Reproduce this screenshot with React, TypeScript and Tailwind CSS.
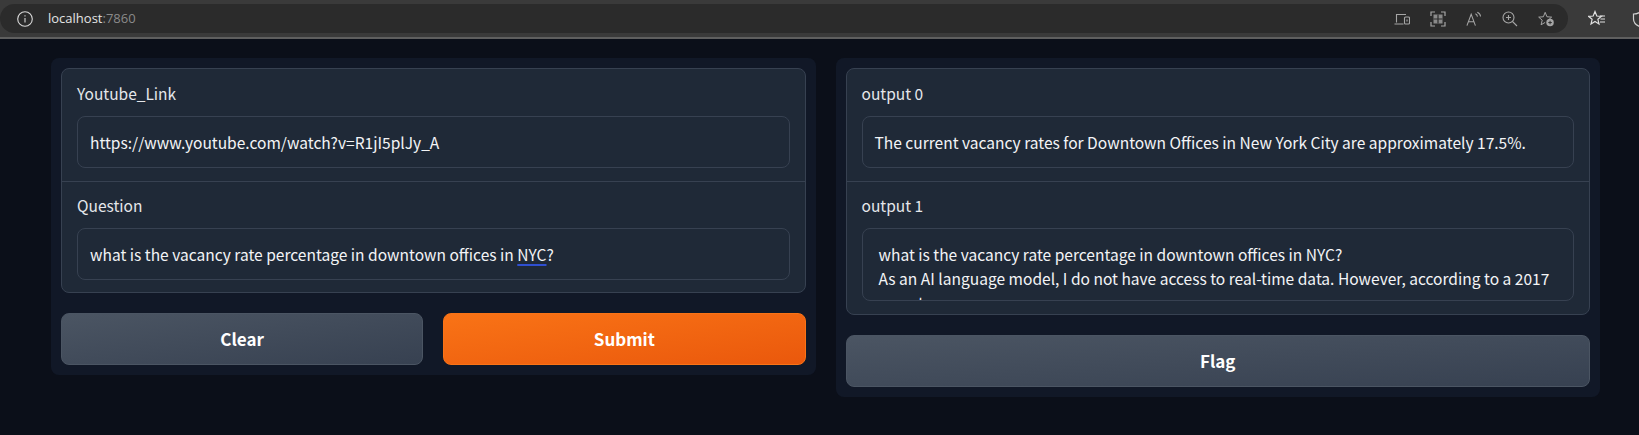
import { ReactNode } from 'react';

const font = { fontFamily: '"Noto Sans CJK SC", "Source Sans Pro", "Noto Sans", sans-serif' };

function BrowserBar() {
  return (
    <div className="h-[38.5px] bg-[#3a3a3a] border-b-2 border-[#5f5f5f] flex items-start pt-[4px] overflow-hidden">
      <div className="w-[1568px] h-[29px] bg-[#2b2b2b] rounded-[15px] flex items-center shrink-0">
        <svg className="ml-[17px] w-[16px] h-[16px]" viewBox="0 0 16 16" fill="none" stroke="#d8d8d8" strokeWidth="1.1">
          <circle cx="8" cy="8" r="7.3" />
          <path d="M8 7v4.500M8 4.200v1.200" />
        </svg>
        <span className="ml-[15px] text-[13px] leading-none text-[#e4e4e4]" style={{ fontFamily: '"Open Sans", sans-serif' }}>
          localhost<span className="text-[#8a8a8a]">:7860</span>
        </span>
        <div className="ml-auto mr-[13px] flex items-center gap-[20px] text-[#a6a6a6]">
          <svg className="w-[16px] h-[16px]" viewBox="0 0 16 16" fill="none" stroke="currentColor" strokeWidth="1.1">
            <path d="M2.500 11.500V3.500h9.500M0.500 13h9" />
            <rect x="10.500" y="6" width="5" height="7" rx="1" />
            <path d="M13 8.500v2" />
          </svg>
          <svg className="w-[16px] h-[16px]" viewBox="0 0 16 16" fill="none" stroke="currentColor" strokeWidth="1.2">
            <path d="M1 5V1h4M11 1h4v4M15 11v4h-4M5 15H1v-4" />
            <rect x="3.500" y="3.500" width="9" height="9" strokeWidth="0" fill="#8a8a8a" />
            <path d="M8 3.500v9M3.500 8h9" stroke="#2b2b2b" />
          </svg>
          <svg className="w-[16px] h-[16px]" viewBox="0 0 17 16" fill="none" stroke="currentColor" strokeWidth="1.1">
            <path d="M1 15 5.500 3 10 15M2.800 11h5.400" />
            <path d="M10 2.500c1.300.5 2 1.500 2.200 3M12 .8c2 .7 3.200 2.300 3.500 4.500" />
          </svg>
          <svg className="w-[16px] h-[16px]" viewBox="0 0 16 16" fill="none" stroke="currentColor" strokeWidth="1.1">
            <circle cx="6.500" cy="6.500" r="5.500" />
            <path d="M10.500 10.500 15 15M4 6.500h5M6.500 4v5" />
          </svg>
          <svg className="w-[17px] h-[16px]" viewBox="0 0 19 18" fill="none" stroke="currentColor" strokeWidth="1.1">
            <path d="M8 1.500 10 6.500l5.300.4-4 3.400 1 3.700M8 1.500 6 6.500l-5.300.4 4 3.400-1.300 5.200L8 12.800" />
            <circle cx="13.500" cy="13" r="4.200" fill="#a6a6a6" stroke="none" />
            <path d="M13.500 11v4M11.500 13h4" stroke="#2b2b2b" />
          </svg>
        </div>
      </div>
      <svg className="ml-[20px] mt-[6px] w-[18px] h-[18px] shrink-0 text-[#e0e0e0]" viewBox="0 0 18 18" fill="none" stroke="currentColor" strokeWidth="1.200">
        <path d="M7 1.500 8.800 6l4.700.3-3.600 3 1.100 4.700L7 11.500 3 14l1.100-4.700-3.600-3L5.200 6z" />
        <path d="M12 6h5M12.500 9h4.500M12 12h5" />
      </svg>
      <svg className="ml-[26px] mt-[6px] w-[18px] h-[18px] shrink-0 text-[#d0d0d0]" viewBox="0 0 18 18" fill="none" stroke="currentColor" strokeWidth="1.200">
        <path d="M1.500 4C5 4 7 3 9 1.500 11 3 13 4 16.500 4v5c0 4-3 6.500-7.500 8C4.500 15.500 1.500 13 1.500 9z" />
      </svg>
    </div>
  );
}

function Field({ label, children, box = 'h-[52px] mb-[13px]', padding = 'px-[12px] py-[13px]', second = false }: {
  label: string;
  children: ReactNode;
  box?: string;
  padding?: string;
  second?: boolean;
}) {
  return (
    <div className={`px-[15px] ${second ? 'pt-[11px] border-t border-[#374151]' : 'pt-[12px]'}`}>
      <div className="h-[24px] text-[15.5px] leading-[24px] text-[#e5e7eb]">{label}</div>
      <div className={`mt-[11px] ${box} ${padding} overflow-hidden rounded-[8px] border border-[#374151] bg-[#1f2937] text-[15.55px] leading-[24px] text-[#f3f4f6]`}>
        {children}
      </div>
    </div>
  );
}

function Button({ children, primary = false }: { children: ReactNode; primary?: boolean }) {
  return (
    <button
      className={`flex-1 h-[52px] rounded-[8px] border text-[17px] font-semibold text-white ${
        primary
          ? 'border-[#f97316] bg-gradient-to-br from-[#f97316] to-[#ea580c]'
          : 'border-[#4b5563] bg-gradient-to-br from-[#4b5563] to-[#374151]'
      }`}
    >
      {children}
    </button>
  );
}

export default function App() {
  return (
    <div className="w-full h-[435px] overflow-hidden bg-[#0b0f19]" style={font}>
      <BrowserBar />
      <main className="flex items-start gap-[20px] pl-[51px] pr-[39px] pt-[19.5px]">
        {/* Inputs */}
        <section className="flex-1 rounded-[8px] bg-[#111827] p-[10px] flex flex-col gap-[20px]">
          <div className="rounded-[8px] border border-[#374151] bg-[#1f2937]">
            <Field label="Youtube_Link">https://www.youtube.com/watch?v=R1jI5plJy_A</Field>
            <Field label="Question" second box="h-[52px] mb-[12px]">
              what is the vacancy rate percentage in downtown offices in{' '}
              <span className="underline decoration-[#2f4fd0] decoration-[1.5px] underline-offset-[3px]">NYC</span>?
            </Field>
          </div>
          <div className="flex gap-[20px]">
            <Button>Clear</Button>
            <Button primary>Submit</Button>
          </div>
        </section>

        {/* Outputs */}
        <section className="flex-1 rounded-[8px] bg-[#111827] p-[10px] flex flex-col gap-[20px]">
          <div className="rounded-[8px] border border-[#374151] bg-[#1f2937]">
            <Field label="output 0">The current vacancy rates for Downtown Offices in New York City are approximately 17.5%.</Field>
            <Field label="output 1" second box="h-[73px] mb-[13px]" padding="px-[16px] py-[13px]">
              what is the vacancy rate percentage in downtown offices in NYC?
              <br />
              As an AI language model, I do not have access to real-time data. However, according to a 2017 report
            </Field>
          </div>
          <div className="flex">
            <Button>Flag</Button>
          </div>
        </section>
      </main>
    </div>
  );
}
